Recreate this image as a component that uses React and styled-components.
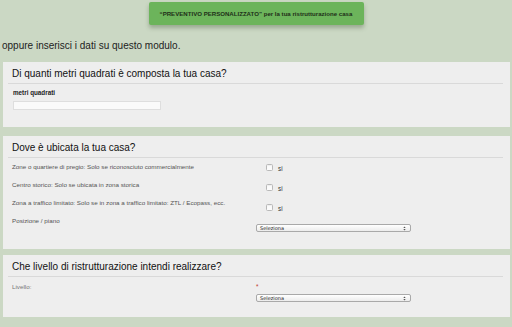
import React from "react";
import styled, { createGlobalStyle } from "styled-components";

const Global = createGlobalStyle`
  html, body { margin: 0; padding: 0; }
  body {
    background: #cbd8c4;
    font-family: "Liberation Sans", Arial, sans-serif;
    color: #222;
    width: 512px;
    height: 327px;
    overflow: hidden;
  }
`;

const Page = styled.div`
  display: flex;
  flex-direction: column;
`;

const CtaButton = styled.div`
  margin: 2px auto 0;
  width: 215px;
  height: 23px;
  background: #6cb45b;
  border-radius: 2px;
  box-shadow: 0 3px 4px rgba(60, 80, 50, 0.35);
  display: flex;
  align-items: center;
  justify-content: center;
  font-size: 6.1px;
  font-weight: bold;
  color: #1e2f18;
  white-space: nowrap;
`;

const Intro = styled.p`
  margin: 15px 0 10px 2px;
  font-size: 10px;
  line-height: 12px;
  color: #222;
`;

const Panel = styled.section`
  margin: 0 2px ${(p) => p.$gap || 0}px 3px;
  background: #eeeeee;
  padding: 6px 7px ${(p) => p.$bottom}px 5px;
`;

const PanelTitle = styled.h2`
  margin: 0;
  padding: 0 4px 3px;
  font-size: 10px;
  line-height: 12px;
  font-weight: normal;
  color: #111;
  border-bottom: 1px solid #d9d9d9;
`;

const Body = styled.div`
  padding: ${(p) => p.$top}px 0 0 4px;
  display: grid;
  grid-template-columns: 244px 1fr;
  align-items: start;
`;

const Stack = styled.div`
  display: flex;
  flex-direction: column;
  padding-top: ${(p) => p.$top || 0}px;
`;

const FieldLabel = styled.div`
  font-size: 6.25px;
  line-height: 8px;
  color: ${(p) => (p.$light ? "#777" : "#555")};
  height: 8px;
  margin-bottom: ${(p) => p.$mb || 0}px;
  white-space: nowrap;
`;

const BoldLabel = styled.div`
  font-size: 6.3px;
  line-height: 8px;
  font-weight: bold;
  color: #222;
  margin: 0 0 4px 1px;
`;

const TextInput = styled.div`
  margin-left: 1px;
  width: 146px;
  height: 7px;
  background: #fafafa;
  border: 1px solid #dedede;
`;

const CheckRow = styled.label`
  display: flex;
  align-items: flex-start;
  gap: 5px;
  height: 20px;
  padding-left: 10px;
  font-size: 6.3px;
  line-height: 8px;
  color: #333;
`;

const Box = styled.span`
  width: 5px;
  height: 5px;
  margin-top: 0;
  border: 1px solid #b9b9b9;
  border-radius: 1.5px;
  background: #fbfbfb;
  box-shadow: inset 0 1px 1px rgba(0, 0, 0, 0.06);
`;

const SiText = styled.span`
  margin-top: 0.5px;
`;

const FakeSelect = styled.div`
  width: 146px;
  height: 6px;
  margin-top: ${(p) => p.$mt || 0}px;
  border: 1px solid #a9a9a9;
  border-radius: 2px;
  background: linear-gradient(#ffffff, #ececec);
  display: flex;
  align-items: center;
  justify-content: space-between;
  padding: 0 4px 0 3px;
  box-sizing: content-box;
  font-family: "DejaVu Sans", sans-serif;
  font-size: 5px;
  line-height: 6px;
  color: #222;
`;

const Req = styled.div`
  color: #c0392b;
  font-size: 6.3px;
  line-height: 8px;
  height: 8px;
`;

const Arrows = () => (
  <svg width="3" height="5" viewBox="0 0 3 5">
    <path d="M0.3 2 L1.5 0.5 L2.7 2 Z M0.3 3 L1.5 4.5 L2.7 3 Z" fill="#555" />
  </svg>
);

const Select = ({ mt }) => (
  <FakeSelect $mt={mt}>
    <span>Seleziona</span>
    <Arrows />
  </FakeSelect>
);

const Check = () => (
  <CheckRow>
    <Box />
    <SiText>si</SiText>
  </CheckRow>
);

export default function App() {
  return (
    <Page>
      <Global />
      <CtaButton>“PREVENTIVO PERSONALIZZATO” per la tua ristrutturazione casa</CtaButton>
      <Intro>oppure inserisci i dati su questo modulo.</Intro>

      <Panel $bottom={17} $gap={9}>
        <PanelTitle>Di quanti metri quadrati è composta la tua casa?</PanelTitle>
        <Body $top={5}>
          <Stack>
            <BoldLabel>metri quadrati</BoldLabel>
            <TextInput />
          </Stack>
        </Body>
      </Panel>

      <Panel $bottom={17} $gap={6}>
        <PanelTitle>Dove è ubicata la tua casa?</PanelTitle>
        <Body $top={0}>
          <Stack $top={5}>
            <FieldLabel $mb={10}>Zone o quartiere di pregio: Solo se riconosciuto commercialmente</FieldLabel>
            <FieldLabel $mb={10}>Centro storico: Solo se ubicata in zona storica</FieldLabel>
            <FieldLabel $mb={10}>Zona a traffico limitato: Solo se in zona a traffico limitato: ZTL / Ecopass, ecc.</FieldLabel>
            <FieldLabel>Posizione / piano</FieldLabel>
          </Stack>
          <Stack $top={6}>
            <Check />
            <Check />
            <Check />
            <Select />
          </Stack>
        </Body>
      </Panel>

      <Panel $bottom={15}>
        <PanelTitle>Che livello di ristrutturazione intendi realizzare?</PanelTitle>
        <Body $top={6}>
          <Stack>
            <FieldLabel $light>Livello:</FieldLabel>
          </Stack>
          <Stack>
            <Req>*</Req>
            <Select mt={3} />
          </Stack>
        </Body>
      </Panel>
    </Page>
  );
}
